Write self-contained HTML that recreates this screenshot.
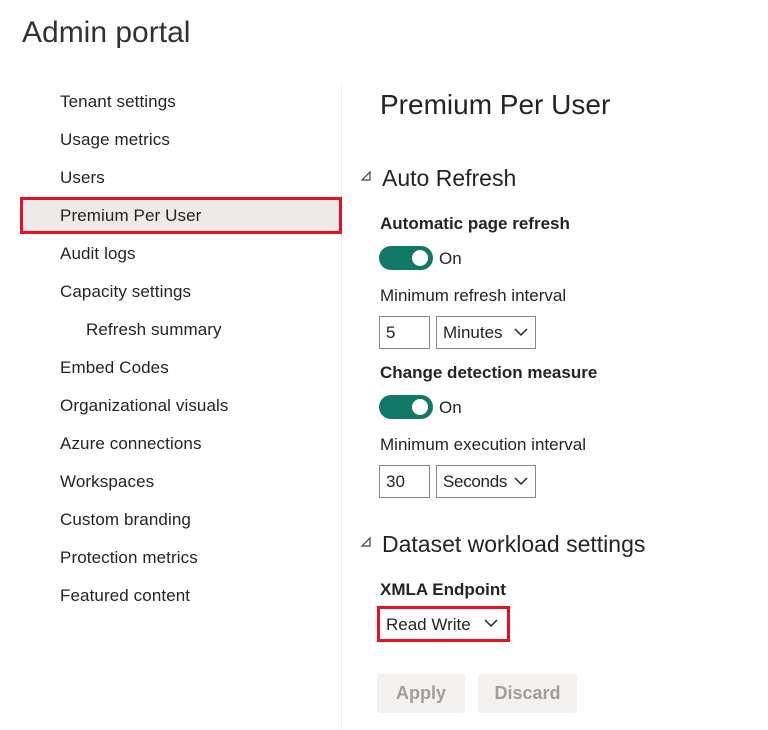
<!DOCTYPE html>
<html><head><style>
body{margin:0;width:768px;height:730px;background:#fff;font-family:"Liberation Sans",sans-serif;color:#252423;position:relative;overflow:hidden}
.a{position:absolute;white-space:nowrap}
.nav{font-size:17px;left:60px;letter-spacing:0.1px}
.lbl{font-size:17px;left:380px}
.b{font-weight:bold}
.tog{position:absolute;width:54px;height:24px;border-radius:12px;background:#117865}
.tog::after{content:"";position:absolute;right:5px;top:4px;width:16px;height:16px;border-radius:50%;background:#fff}
.box{position:absolute;border:1px solid #8a8886;height:33px;box-sizing:border-box;font-size:17px;line-height:31px;padding-left:6px}
.chev{position:absolute;right:6px;top:7px}
.btn{position:absolute;background:#f3f2f1;color:#a19f9d;font-size:18px;text-align:center;line-height:39px;height:39px;border-radius:3px;font-weight:bold}
</style></head><body>
<div class="a" style="left:22px;top:16px;font-size:30px;color:#323130">Admin portal</div>
<div style="position:absolute;left:341px;top:85px;width:1px;height:645px;background:#edebe9"></div>
<div style="position:absolute;left:20px;top:197px;width:322px;height:37px;background:#edebe9;box-sizing:border-box;border:3px solid #e81123"></div>
<div class="a nav" style="top:92px">Tenant settings</div>
<div class="a nav" style="top:130px">Usage metrics</div>
<div class="a nav" style="top:168px">Users</div>
<div class="a nav" style="top:206px">Premium Per User</div>
<div class="a nav" style="top:244px">Audit logs</div>
<div class="a nav" style="top:282px">Capacity settings</div>
<div class="a nav" style="top:320px;left:86px">Refresh summary</div>
<div class="a nav" style="top:358px">Embed Codes</div>
<div class="a nav" style="top:396px">Organizational visuals</div>
<div class="a nav" style="top:434px">Azure connections</div>
<div class="a nav" style="top:472px">Workspaces</div>
<div class="a nav" style="top:510px">Custom branding</div>
<div class="a nav" style="top:548px">Protection metrics</div>
<div class="a nav" style="top:586px">Featured content</div>

<div class="a" style="left:380px;top:89px;font-size:28px;color:#252423">Premium Per User</div>
<svg class="a" style="left:360px;top:170px" width="12" height="12"><path d="M10 2 L10 10 L2 10 Z" fill="none" stroke="#444" stroke-width="1.2"/></svg>
<div class="a" style="left:382px;top:165px;font-size:23px">Auto Refresh</div>
<div class="a lbl b" style="top:214px">Automatic page refresh</div>
<div class="tog" style="left:379px;top:246px"></div>
<div class="a lbl" style="left:439px;top:249px">On</div>
<div class="a lbl" style="top:286px">Minimum refresh interval</div>
<div class="box" style="left:379px;top:316px;width:51px">5</div>
<div class="box" style="left:436px;top:316px;width:100px">Minutes<svg class="chev" width="16" height="16"><path d="M2 5 L8 11 L14 5" fill="none" stroke="#252423" stroke-width="1.5"/></svg></div>
<div class="a lbl b" style="top:363px">Change detection measure</div>
<div class="tog" style="left:379px;top:395px"></div>
<div class="a lbl" style="left:439px;top:398px">On</div>
<div class="a lbl" style="top:435px">Minimum execution interval</div>
<div class="box" style="left:379px;top:465px;width:51px">30</div>
<div class="box" style="left:436px;top:465px;width:100px;letter-spacing:-0.3px">Seconds<svg class="chev" width="16" height="16"><path d="M2 5 L8 11 L14 5" fill="none" stroke="#252423" stroke-width="1.5"/></svg></div>
<svg class="a" style="left:360px;top:536px" width="12" height="12"><path d="M10 2 L10 10 L2 10 Z" fill="none" stroke="#444" stroke-width="1.2"/></svg>
<div class="a" style="left:382px;top:531px;font-size:23px">Dataset workload settings</div>
<div class="a lbl b" style="top:580px">XMLA Endpoint</div>
<div style="position:absolute;left:377px;top:606px;width:133px;height:36px;box-sizing:border-box;border:3px solid #e81123"></div>
<div class="a lbl" style="left:386px;top:615px">Read Write</div>
<svg class="a" style="left:483px;top:615px" width="16" height="16"><path d="M2 5 L8 11 L14 5" fill="none" stroke="#252423" stroke-width="1.5"/></svg>
<div class="btn" style="left:377px;top:674px;width:88px">Apply</div>
<div class="btn" style="left:478px;top:674px;width:99px">Discard</div>
</body></html>
